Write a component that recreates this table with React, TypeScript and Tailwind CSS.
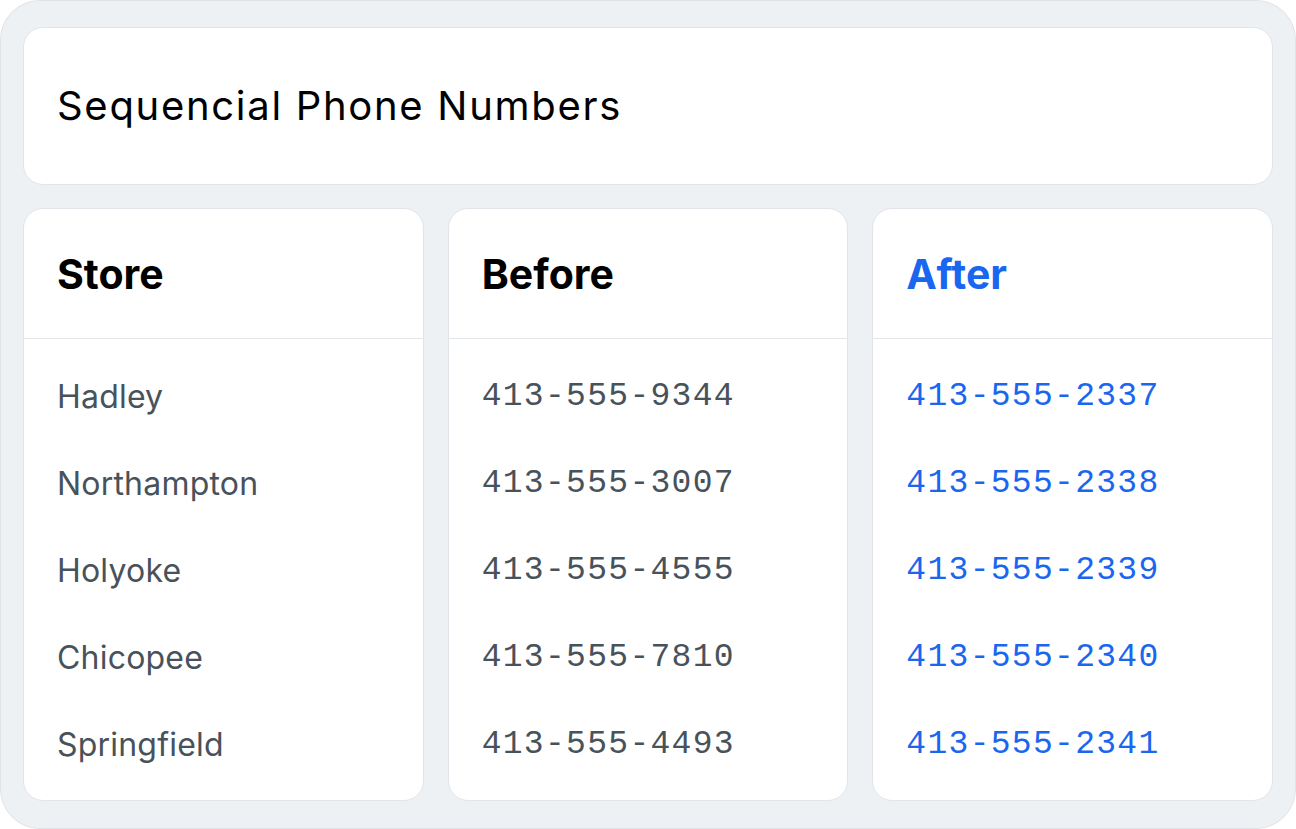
// Sequential phone numbers comparison card

const rows = [
  { store: "Hadley", before: "413-555-9344", after: "413-555-2337" },
  { store: "Northampton", before: "413-555-3007", after: "413-555-2338" },
  { store: "Holyoke", before: "413-555-4555", after: "413-555-2339" },
  { store: "Chicopee", before: "413-555-7810", after: "413-555-2340" },
  { store: "Springfield", before: "413-555-4493", after: "413-555-2341" },
];

const sans = "font-['Inter','Noto_Sans',sans-serif]";
const mono = "font-['Liberation_Mono','DejaVu_Sans_Mono',monospace]";

function Column({
  title,
  items,
  accent,
  isMono,
}: {
  title: string;
  items: string[];
  accent?: boolean;
  isMono?: boolean;
}) {
  return (
    <div className="flex flex-col rounded-[20px] border border-[#e1e5e9] bg-white">
      <div className="flex h-[130px] items-center border-b border-[#e1e5e9] px-[33px] pt-[2px]">
        <h2
          className={`${sans} text-[41px] font-bold tracking-[0px] ${
            accent ? "text-[#1a66ee]" : "text-black"
          }`}
        >
          {title}
        </h2>
      </div>
      <div className="flex flex-col pt-[14px] pb-[12px]">
        {items.map(v => (
          <div key={v} className="flex h-[87px] items-center px-[33px]">
            <span
              className={
                isMono
                  ? `${mono} text-[33px] tracking-[1.3px] ${accent ? "text-[#1a66ee]" : "text-[#48525b]"}`
                  : `${sans} text-[32px] tracking-[0.2px] text-[#48525b]`
              }
            >
              {v}
            </span>
          </div>
        ))}
      </div>
    </div>
  );
}

export default function App() {
  return (
    <div className="h-[829px] w-[1296px] bg-white">
      <div className="flex h-[829px] flex-col gap-[23px] rounded-[40px] border border-[#dfe3e7] bg-[#eef1f4] px-[22px] pt-[26px] pb-[26px]">
        {/* Title */}
        <div className="flex h-[158px] shrink-0 items-center rounded-[20px] border border-[#e1e5e9] bg-white px-[33px]">
          <h1 className={`${sans} text-[40px] font-normal tracking-[1.7px] text-black`}>
            Sequencial Phone Numbers
          </h1>
        </div>

        {/* Columns */}
        <div className="grid shrink-0 grid-cols-3 gap-[24px]">
          <Column title="Store" items={rows.map(r => r.store)} />
          <Column title="Before" items={rows.map(r => r.before)} isMono />
          <Column title="After" items={rows.map(r => r.after)} isMono accent />
        </div>
      </div>
    </div>
  );
}
